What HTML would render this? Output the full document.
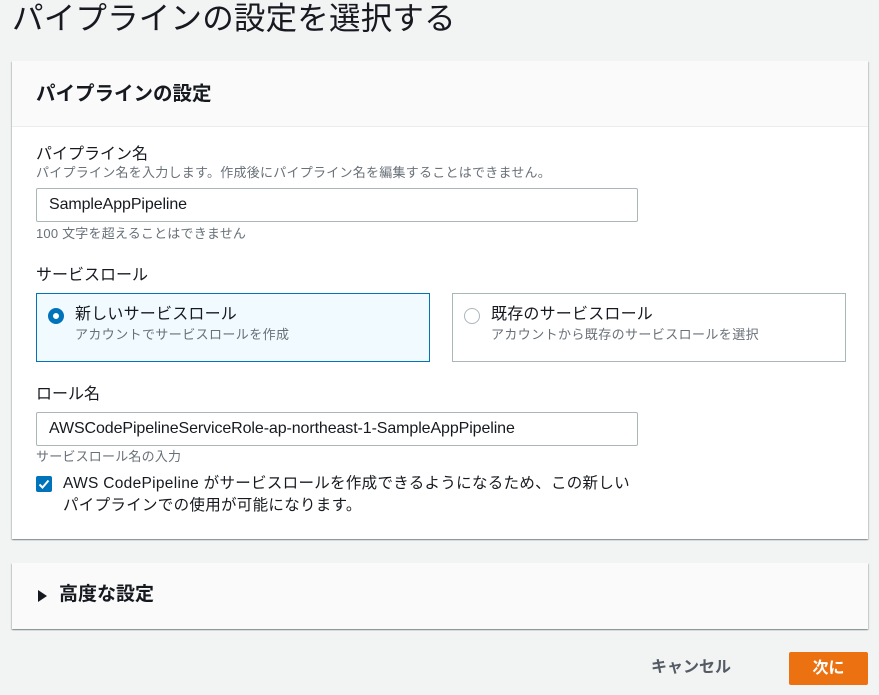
<!DOCTYPE html>
<html><head><meta charset="utf-8"><style>
*{box-sizing:border-box;margin:0;padding:0}
body{width:879px;height:695px;background:#f2f3f3;font-family:"Liberation Sans","Noto Sans CJK JP",sans-serif;color:#16191f;position:relative;overflow:hidden}
.a{position:absolute;white-space:nowrap}
.panel{position:absolute;left:12px;width:856px;background:#fff;box-shadow:0 1px 1px 0 rgba(0,28,36,.3),1px 1px 1px 0 rgba(0,28,36,.15),-1px 1px 1px 0 rgba(0,28,36,.15)}
.inp{position:absolute;left:36px;width:602px;height:34px;border:1px solid #aab7b8;border-radius:2px;font-size:16px;padding:7px 12px;line-height:18px;letter-spacing:-0.1px}
.g{color:#687078;font-size:13px;letter-spacing:0.2px}
.tile{position:absolute;top:293px;height:69px;width:394px;border:1px solid #aab7b8}
</style></head><body>
<div class="a" style="left:12px;top:-2px;font-size:31.5px;line-height:40px;letter-spacing:0.2px">パイプラインの設定を選択する</div>
<div class="panel" style="top:61px;height:478px">
  <div style="height:66px;background:#fafafa;border-bottom:1px solid #eaeded"></div>
</div>
<div class="a" style="left:36px;top:81px;font-size:19.5px;font-weight:bold;line-height:26px">パイプラインの設定</div>
<div class="a" style="left:36px;top:144px;font-size:16px;line-height:22px">パイプライン名</div>
<div class="a g" style="left:36px;top:164px;line-height:18px;letter-spacing:0.25px">パイプライン名を入力します。作成後にパイプライン名を編集することはできません。</div>
<div class="inp" style="top:188px">SampleAppPipeline</div>
<div class="a g" style="left:36px;top:225px;line-height:18px">100 文字を超えることはできません</div>
<div class="a" style="left:36px;top:265px;font-size:16px;line-height:22px">サービスロール</div>
<div class="tile" style="left:36px;border-color:#0073bb;background:#f1faff"></div>
<div class="a" style="left:48px;top:308px;width:16px;height:16px;border-radius:50%;border:5px solid #0073bb;background:#fff"></div>
<div class="a" style="left:75px;top:304px;font-size:16px;line-height:22px;letter-spacing:0.2px">新しいサービスロール</div>
<div class="a g" style="left:75px;top:326px;line-height:18px;letter-spacing:0.4px">アカウントでサービスロールを作成</div>
<div class="tile" style="left:452px"></div>
<div class="a" style="left:464px;top:308px;width:16px;height:16px;border-radius:50%;border:1px solid #aab7b8;background:#fff"></div>
<div class="a" style="left:491px;top:304px;font-size:16px;line-height:22px;letter-spacing:0.2px">既存のサービスロール</div>
<div class="a g" style="left:491px;top:326px;line-height:18px;letter-spacing:0.4px">アカウントから既存のサービスロールを選択</div>
<div class="a" style="left:36px;top:384px;font-size:16px;line-height:22px">ロール名</div>
<div class="inp" style="top:412px">AWSCodePipelineServiceRole-ap-northeast-1-SampleAppPipeline</div>
<div class="a g" style="left:36px;top:448px;line-height:18px">サービスロール名の入力</div>
<div class="a" style="left:36px;top:476px;width:16px;height:16px;background:#0073bb;border-radius:2px">
<svg width="16" height="16" viewBox="0 0 16 16"><path d="M3.5 8.5l3 3 6-7" fill="none" stroke="#fff" stroke-width="2"/></svg></div>
<div class="a" style="left:63px;top:473px;font-size:15.5px;line-height:22px;letter-spacing:0.3px">AWS CodePipeline がサービスロールを作成できるようになるため、この新しい<br>パイプラインでの使用が可能になります。</div>
<div class="panel" style="top:563px;height:66px;background:#fafafa"></div>
<div class="a" style="left:38px;top:590px;width:0;height:0;border-left:9px solid #16191f;border-top:6px solid transparent;border-bottom:6px solid transparent"></div>
<div class="a" style="left:59px;top:582px;font-size:19px;font-weight:bold;line-height:26px">高度な設定</div>
<div class="a" style="left:651px;top:657px;font-size:16px;font-weight:bold;color:#545b64;line-height:22px">キャンセル</div>
<div class="a" style="left:789px;top:652px;width:79px;height:33px;background:#ec7211;border-radius:2px;color:#fff;font-weight:bold;font-size:16px;text-align:center;line-height:33px">次に</div>
</body></html>
